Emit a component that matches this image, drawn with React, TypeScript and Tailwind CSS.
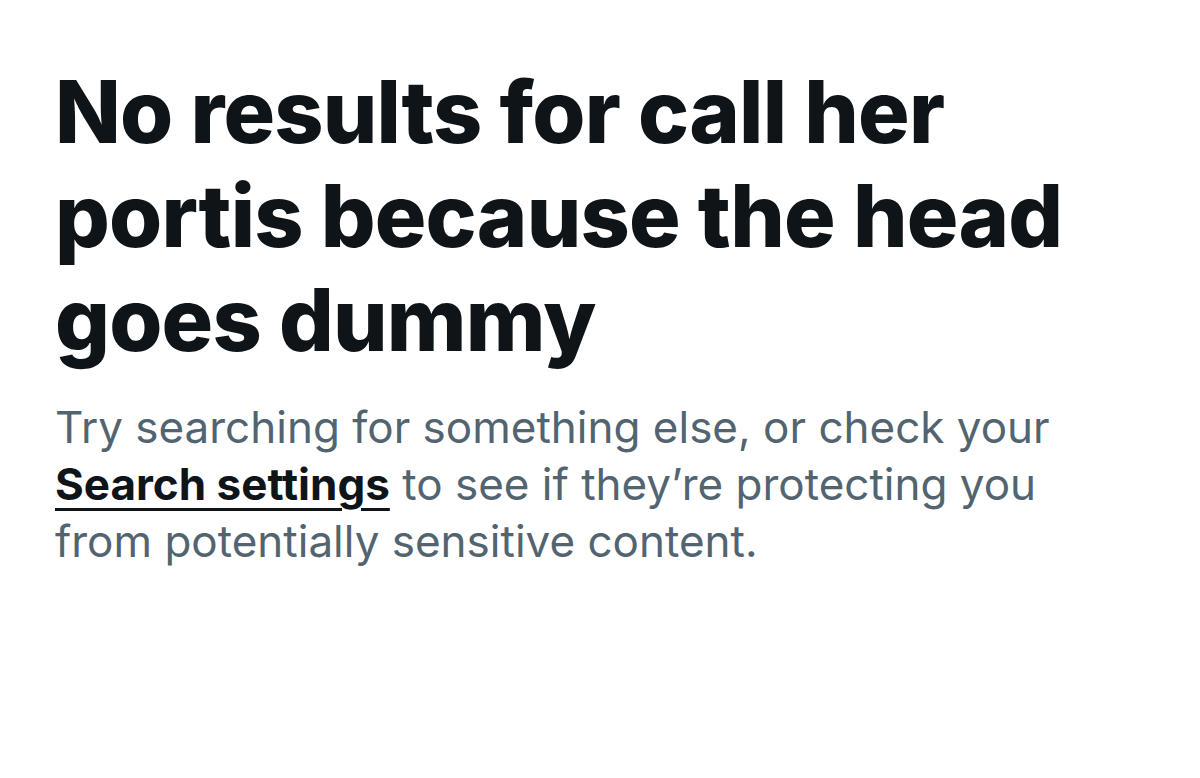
export default function App() {
  return (
    <div className="min-h-[778px] w-[1200px] bg-white" style={{ fontFamily: 'Inter, "Noto Sans", sans-serif' }}>
      <div className="px-[55px] pt-[60px]">
        <h1 className="text-[86px] font-extrabold leading-[104px] tracking-[-0.8px] text-[#0f1419]">
          No results for call her portis because the head goes dummy
        </h1>
        <p className="mt-[27px] text-[44px] leading-[57px] text-[#536471]">
          Try searching for something else, or check your{' '}
          <a href="#" className="font-bold text-[#0f1419] underline decoration-[3px] underline-offset-[8px]">
            Search settings
          </a>{' '}
          to see if they’re protecting you from potentially sensitive content.
        </p>
      </div>
    </div>
  );
}
